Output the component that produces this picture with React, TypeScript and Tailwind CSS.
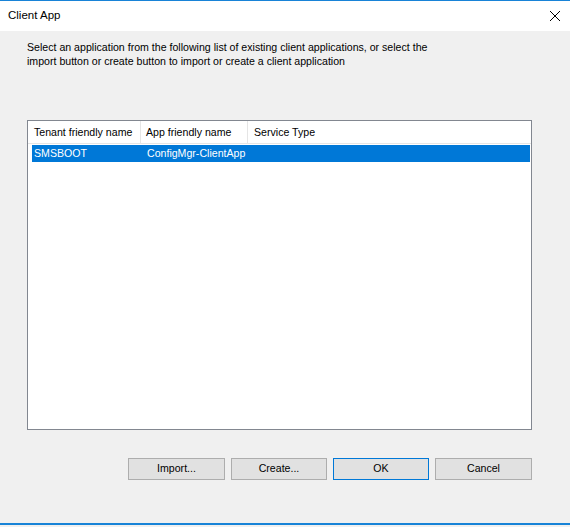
import React from "react";

export default function App() {
  const font = { fontFamily: '"Liberation Sans", Arial, sans-serif' };
  return (
    <div className="w-[570px] h-[527px] bg-[#f0f0f0] flex flex-col text-[10.6px] text-black overflow-hidden" style={font}>
      <div className="h-[1px] shrink-0 bg-[#1883d7]" />
      <div className="h-[30px] shrink-0 bg-white flex items-center justify-between pl-[8px] pr-[8px]">
        <span className="text-[11.5px] text-black">Client App</span>
        <svg width="12" height="12" viewBox="0 0 12 12" className="mr-[1px]">
          <path d="M1 1 L11 11 M11 1 L1 11" stroke="#000" strokeWidth="1" fill="none" />
        </svg>
      </div>
      <div className="flex-1 flex flex-col pl-[27px] pr-[38px]">
        <div className="mt-[9px] leading-[14px] text-black whitespace-nowrap">
          <div>Select an application from the following list of existing client applications, or select the</div>
          <div>import button or create button to import or create a client application</div>
        </div>
        <div className="mt-[52px] h-[310px] shrink-0 border border-[#828790] bg-white flex flex-col">
          <div className="h-[23px] flex items-stretch border-b border-[#e5e5e5] whitespace-nowrap">
            <div className="w-[113px] border-r border-[#e5e5e5] flex items-center pl-[6px] pt-[1px]">Tenant friendly name</div>
            <div className="w-[107px] border-r border-[#e5e5e5] flex items-center pl-[5px] pt-[1px]">App friendly name</div>
            <div className="flex-1 flex items-center pl-[6px] pt-[1px]">Service Type</div>
          </div>
          <div className="mt-[1px] ml-[4px] mr-[1px] h-[17px] bg-[#0078d7] text-white flex items-center whitespace-nowrap">
            <div className="w-[109px] pl-[2px]">SMSBOOT</div>
            <div className="pl-[6px]">ConfigMgr-ClientApp</div>
          </div>
        </div>
        <div className="mt-[28px] flex justify-end gap-[6px]">
          <button className="w-[97px] h-[22px] bg-[#e1e1e1] border border-[#adadad] text-[10.6px] text-black" style={font}>Import...</button>
          <button className="w-[96px] h-[22px] bg-[#e1e1e1] border border-[#adadad] text-[10.6px] text-black" style={font}>Create...</button>
          <button className="w-[96px] h-[22px] bg-[#e1e1e1] border border-[#0078d7] text-[10.6px] text-black" style={font}>OK</button>
          <button className="w-[97px] h-[22px] bg-[#e1e1e1] border border-[#adadad] text-[10.6px] text-black" style={font}>Cancel</button>
        </div>
      </div>
      <div className="h-[2px] shrink-0 bg-[#1883d7]" />
      <div className="h-[2px] shrink-0 bg-[#f0f0f0]" />
    </div>
  );
}
